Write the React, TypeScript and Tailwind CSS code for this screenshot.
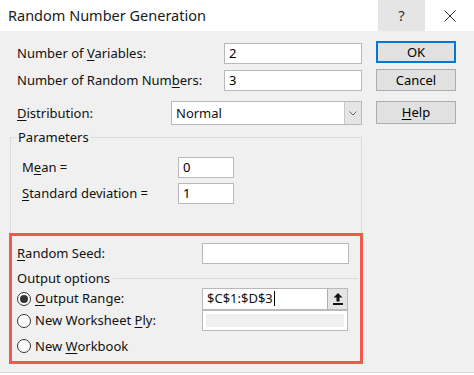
import React from "react";

function U({ children }: { children: React.ReactNode }) {
  return <span className="underline decoration-1 underline-offset-[2px]">{children}</span>;
}

function TextBox({ value, className = "" }: { value?: string; className?: string }) {
  return (
    <div
      className={`flex items-center border border-[#b9b9b9] bg-white pl-[4px] text-[13px] text-black ${className}`}
    >
      {value}
    </div>
  );
}

function Radio({ checked }: { checked?: boolean }) {
  return (
    <span className="flex h-[14px] w-[14px] items-center justify-center rounded-full border border-[#333] bg-white">
      {checked && <span className="h-[8px] w-[8px] rounded-full bg-[#333]" />}
    </span>
  );
}

function DialogButton({ children, primary }: { children: React.ReactNode; primary?: boolean }) {
  return (
    <button
      type="button"
      className={`flex w-[80px] items-center justify-center bg-[#e1e1e1] text-[13px] text-black ${
        primary ? "border-2 border-[#0078d7]" : "border border-[#adadad]"
      }`}
    >
      {children}
    </button>
  );
}

export default function App() {
  return (
    <div className="h-[375px] w-[474px] overflow-hidden bg-[#f0f0f0] font-['Noto_Sans','Open_Sans',sans-serif] text-[13px] leading-none text-[#111]">
      {/* title bar */}
      <div className="flex h-[31px] items-stretch bg-white">
        <div className="flex flex-1 items-center pl-[8px] text-[14.5px] text-[#1a1a1a]">
          Random Number Generation
        </div>
        <div className="flex w-[47px] items-center justify-center bg-[#e5e5e5] text-[15px] text-[#333]">?</div>
        <div className="flex w-[49px] items-center justify-center">
          <svg width="12" height="12" viewBox="0 0 12 12" stroke="#333" strokeWidth="1">
            <path d="M0.5 0.5 L11.5 11.5 M11.5 0.5 L0.5 11.5" />
          </svg>
        </div>
      </div>

      <div className="flex h-[341px]">
        {/* left column */}
        <div className="w-[364px]">
          <div className="mt-[12px] flex h-[21px] items-center">
            <div className="w-[224px] pl-[17px]">
              Number of <U>V</U>ariables:
            </div>
            <TextBox value="2" className="h-[21px] w-[138px]" />
          </div>
          <div className="mt-[6px] flex h-[21px] items-center">
            <div className="w-[224px] pl-[17px]">
              Number of Random Num<U>b</U>ers:
            </div>
            <TextBox value="3" className="h-[21px] w-[138px]" />
          </div>
          <div className="mt-[10px] flex h-[24px] items-center">
            <div className="w-[171px] pl-[17px]">
              <U>D</U>istribution:
            </div>
            <div className="flex h-[24px] w-[191px] items-stretch border border-[#b9b9b9] bg-white">
              <div className="flex flex-1 items-center pl-[4px]">Normal</div>
              <div className="flex w-[17px] items-center justify-center border-l border-[#c8c8c8] bg-[#e5e5e5]">
                <svg width="8" height="5" viewBox="0 0 8 5" fill="none" stroke="#666" strokeWidth="1">
                  <path d="M0.5 0.5 L4 4 L7.5 0.5" />
                </svg>
              </div>
            </div>
          </div>

          <fieldset className="ml-[10px] mt-[4px] h-[104px] w-[352px] border border-b-0 border-[#dcdcdc]">
            <legend className="ml-[6px] px-[1px] leading-[16px]">Parameters</legend>
            <div className="mt-[12px] flex h-[20px] items-center">
              <div className="w-[167px] pl-[11px]">
                M<U>e</U>an =
              </div>
              <TextBox value="0" className="h-[21px] w-[56px]" />
            </div>
            <div className="mt-[6px] flex h-[21px] items-center">
              <div className="w-[167px] pl-[11px]">
                <U>S</U>tandard deviation =
              </div>
              <TextBox value="1" className="h-[21px] w-[56px]" />
            </div>
          </fieldset>

          <div className="ml-[9px] h-[131px] w-[354px] border-[3px] border-[#f05850]">
            <div className="mt-[7px] flex h-[20px] items-center">
              <div className="w-[190px] pl-[5px]">
                <U>R</U>andom Seed:
              </div>
              <TextBox className="h-[21px] w-[147px]" />
            </div>
            <div className="mt-[7px] flex h-[16px] items-center pl-[5px]">
              <span>Output options</span>
              <div className="ml-[3px] mr-[2px] flex-1 border-t border-[#dcdcdc]" />
            </div>
            <div className="mt-[2px] flex h-[21px] items-center">
              <div className="flex w-[190px] items-center gap-[4px] pl-[5px]">
                <Radio checked />
                <span>
                  <U>O</U>utput Range:
                </span>
              </div>
              <div className="flex h-[22px] w-[146px] items-stretch border border-[#b9b9b9] bg-white">
                <div className="flex flex-1 items-center pl-[4px]">
                  $C$1:$D$3<span className="ml-[1px] h-[15px] w-px bg-black" />
                </div>
                <div className="flex w-[20px] items-center justify-center border-l border-[#adadad] bg-[#e5e5e5]">
                  <svg width="10" height="12" viewBox="0 0 10 12" fill="#111">
                    <path d="M5 0 L9.5 4.5 L6.5 4.5 L6.5 8.5 L3.5 8.5 L3.5 4.5 L0.5 4.5 Z" />
                    <rect x="0" y="10" width="10" height="2" />
                  </svg>
                </div>
              </div>
            </div>
            <div className="mt-[1px] flex h-[21px] items-center">
              <div className="flex w-[190px] items-center gap-[4px] pl-[5px]">
                <Radio />
                <span>
                  New Worksheet <U>P</U>ly:
                </span>
              </div>
              <div className="flex h-[21px] w-[146px] items-center border border-[#b9b9b9] bg-white p-[3px]">
                <div className="h-full w-full bg-[#f0f0f0]" />
              </div>
            </div>
            <div className="mt-[7px] flex h-[16px] items-center gap-[4px] pl-[5px]">
              <Radio />
              <span>
                New <U>W</U>orkbook
              </span>
            </div>
          </div>
        </div>

        {/* right column */}
        <div className="ml-[12px] flex flex-col pt-[10px]">
          <div className="flex h-[22px]">
            <DialogButton primary>OK</DialogButton>
          </div>
          <div className="mt-[6px] flex h-[22px]">
            <DialogButton>Cancel</DialogButton>
          </div>
          <div className="mt-[10px] flex h-[23px]">
            <DialogButton>
              <U>H</U>elp
            </DialogButton>
          </div>
        </div>
      </div>
      <div className="h-[3px] border-t border-[#dcdcdc] bg-white" />
    </div>
  );
}
